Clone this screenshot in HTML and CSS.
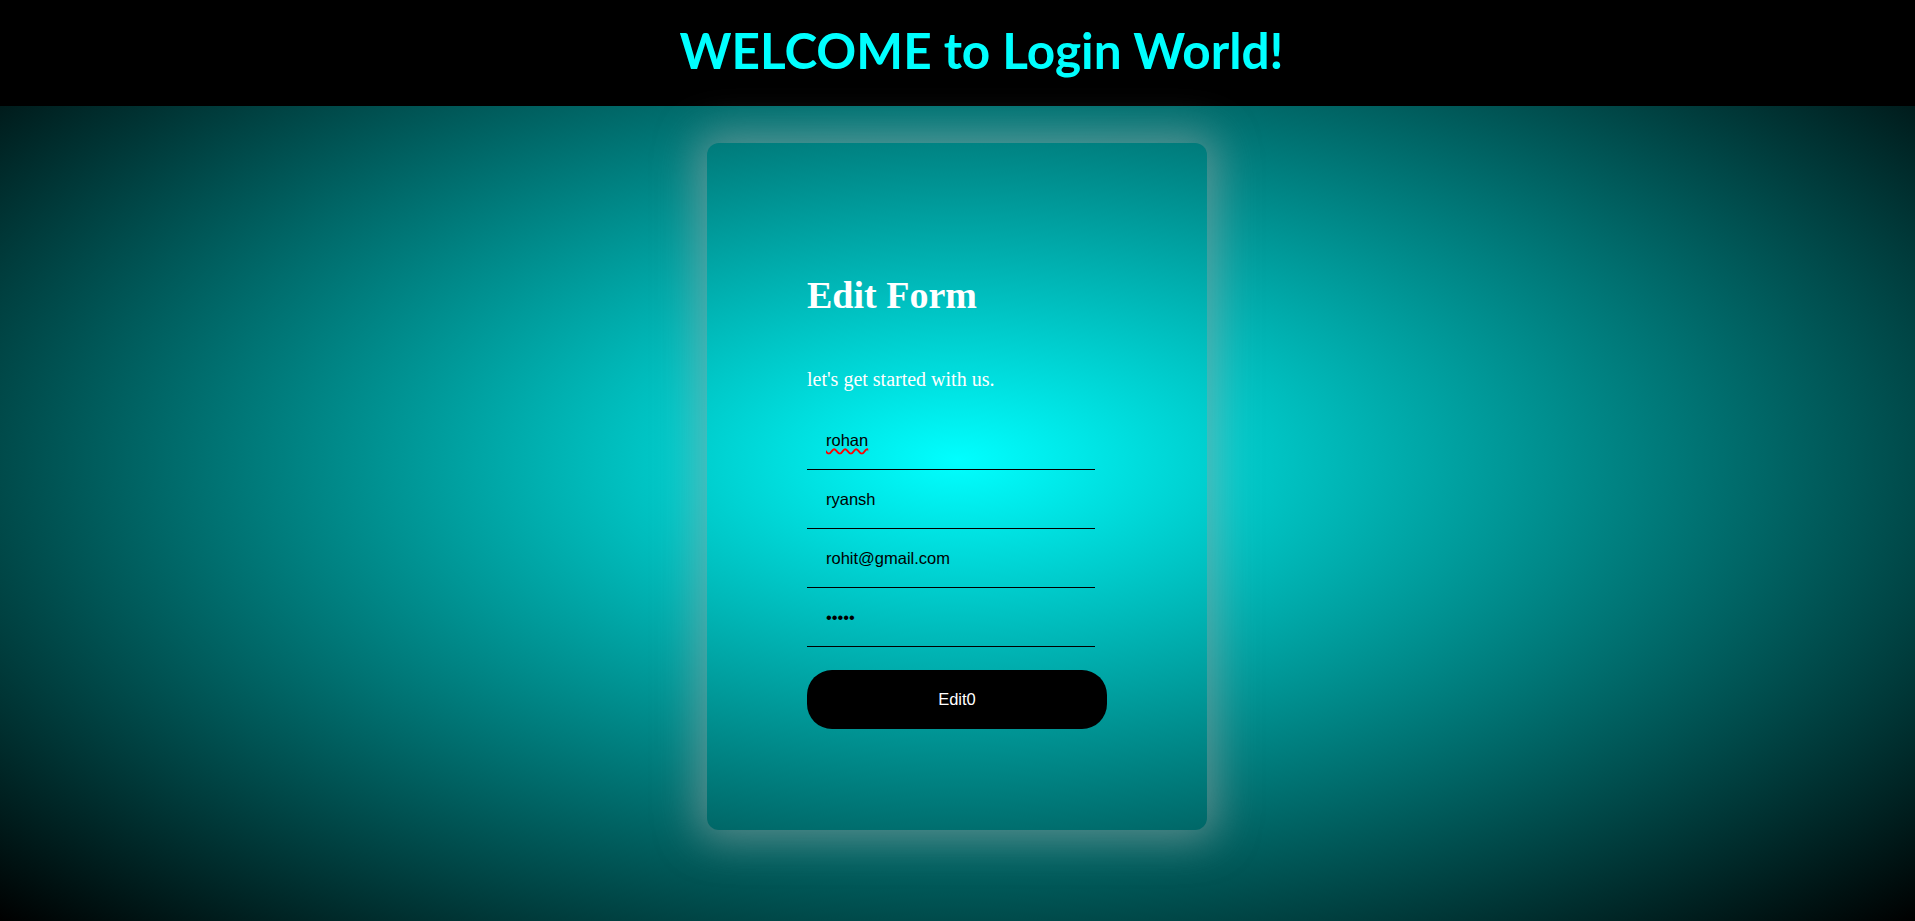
FILE: index.html
```html
<!DOCTYPE html>
<html lang="en">
<head>
<meta charset="utf-8">
<title>Edit Form</title>
<link rel="stylesheet" href="styles.css">
</head>
<body>
<div class="page">
  <header class="topbar">
    <h1 class="title">WELCOME to Login World!</h1>
  </header>
  <main class="main">
    <section class="card">
      <form class="form">
        <h2 class="form-title">Edit Form</h2>
        <p class="form-sub">let's get started with us.</p>
        <div class="field-wrap">
          <input class="field" type="text" value="rohan">
          <span class="spell" aria-hidden="true">rohan</span>
        </div>
        <input class="field" type="text" value="ryansh">
        <input class="field" type="email" value="rohit@gmail.com">
        <input class="field" type="password" value="rohit">
        <button class="btn" type="button">Edit0</button>
      </form>
    </section>
  </main>
</div>
</body>
</html>
```
FILE: styles.css
```css
* { box-sizing: border-box; }
html, body { margin: 0; padding: 0; }
body { background: #000; }
.page {
  height: 100vh;
  display: flex;
  flex-direction: column;
  background: radial-gradient(ellipse at center, #00ffff 0%, #000000 100%);
  overflow: hidden;
}
.topbar {
  height: 106px;
  flex: none;
  background: #000;
  display: flex;
  justify-content: center;
  align-items: center;
  padding-bottom: 6px;
}
.title {
  margin: 0;
  padding-left: 48px;
  font-family: "Lato", "Open Sans", sans-serif;
  font-weight: 700;
  font-size: 49.5px;
  line-height: 60px;
  color: #00ffff;
}
.main {
  display: flex;
  justify-content: center;
  padding-top: 37px;
  padding-right: 1px;
}
.card {
  width: 500px;
  height: 687px;
  border-radius: 12px;
  box-shadow: 0 0 40px 10px rgba(160, 160, 160, 0.55);
  padding: 133px 100px 0 100px;
}
.form {
  display: flex;
  flex-direction: column;
  align-items: flex-start;
}
.form-title {
  margin: 0;
  font-family: "Liberation Serif", "Times New Roman", serif;
  font-weight: 700;
  font-size: 38px;
  line-height: 38px;
  color: #fff;
}
.form-sub {
  margin: 55px 0 22px 0;
  font-family: "Liberation Serif", "Times New Roman", serif;
  font-size: 20px;
  line-height: 20px;
  color: #fff;
}
.field-wrap {
  position: relative;
}
.field {
  display: block;
  margin: 0;
  width: 288px;
  height: 59px;
  padding: 0 19px;
  border: none;
  border-bottom: 1px solid #000;
  background: transparent;
  outline: none;
  font-family: "Liberation Sans", Arial, sans-serif;
  font-size: 16.5px;
  color: #000;
}
.spell {
  position: absolute;
  left: 19px;
  top: 0;
  height: 58px;
  display: flex;
  align-items: center;
  font-family: "Liberation Sans", Arial, sans-serif;
  font-size: 16.5px;
  color: transparent;
  text-decoration: underline wavy #ff0000;
  text-decoration-thickness: 1.5px;
  text-underline-offset: 2px;
  pointer-events: none;
}
.btn {
  margin-top: 23px;
  width: 300px;
  height: 59px;
  border: none;
  border-radius: 25px;
  background: #000;
  color: #fff;
  font-family: "Liberation Sans", Arial, sans-serif;
  font-size: 16.5px;
  cursor: pointer;
}
```
